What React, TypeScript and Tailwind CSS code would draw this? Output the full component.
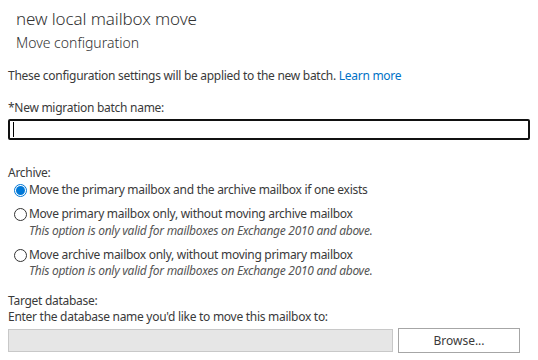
import React from "react";

function Radio({ checked }: { checked?: boolean }) {
  return checked ? (
    <span className="mt-[2px] flex h-[13px] w-[13px] shrink-0 items-center justify-center rounded-full border border-[#0078d7] bg-white">
      <span className="h-[9px] w-[9px] rounded-full bg-[#0078d7]" />
    </span>
  ) : (
    <span className="mt-[2px] h-[13px] w-[13px] shrink-0 rounded-full border border-[#333333] bg-white" />
  );
}

export default function App() {
  return (
    <div
      className="h-[360px] w-[538px] overflow-hidden bg-white text-[12px] tracking-[-0.28px] text-[#3a3a3a]"
      style={{ fontFamily: '"Segoe UI", "Noto Sans", "Open Sans", sans-serif' }}
    >
      <div className="px-[16px] pt-[5px]">
        <div className="text-[17px] font-light leading-[28px] tracking-[-0.1px] text-[#333333]">new local mailbox move</div>
        <div className="mt-[0px] text-[14px] font-light leading-[20px] tracking-normal text-[#333333]">Move configuration</div>
      </div>
      <div className="px-[8px]">
        <div className="mt-[15px] leading-[16px]">
          These configuration settings will be applied to the new batch.{" "}
          <span className="text-[#0072c6]">Learn more</span>
        </div>
        <div className="mt-[16px] leading-[16px]">*New migration batch name:</div>
        <div className="mt-[3px] h-[21px] w-[522px] rounded-[2px] border-2 border-[#111111] bg-white pl-[3px] pt-[1px]">
          <div className="h-[15px] w-[1px] bg-black" />
        </div>
        <div className="mt-[25px] leading-[16px]">Archive:</div>
        <div className="mt-[1px] flex flex-col gap-[8px] pl-[6px]">
          <div className="flex gap-[2px] leading-[16px]">
            <Radio checked />
            <span>Move the primary mailbox and the archive mailbox if one exists</span>
          </div>
          <div className="flex gap-[2px] leading-[16px]">
            <Radio />
            <div>
              <div>Move primary mailbox only, without moving archive mailbox</div>
              <div className="mt-[1px] italic text-[#555555]">This option is only valid for mailboxes on Exchange 2010 and above.</div>
            </div>
          </div>
          <div className="flex gap-[2px] leading-[16px]">
            <Radio />
            <div>
              <div>Move archive mailbox only, without moving primary mailbox</div>
              <div className="italic text-[#555555]">This option is only valid for mailboxes on Exchange 2010 and above.</div>
            </div>
          </div>
        </div>
        <div className="mt-[14px] leading-[16px]">Target database:</div>
        <div className="leading-[16px]">Enter the database name you'd like to move this mailbox to:</div>
        <div className="mt-[3px] flex items-center gap-[5px]">
          <div className="h-[23px] w-[385px] border border-[#c8c8c8] bg-[#e6e6e6]" />
          <div className="flex h-[25px] w-[122px] items-center justify-center border border-[#a6a6a6] bg-white text-[12px] tracking-normal">
            Browse...
          </div>
        </div>
      </div>
    </div>
  );
}
